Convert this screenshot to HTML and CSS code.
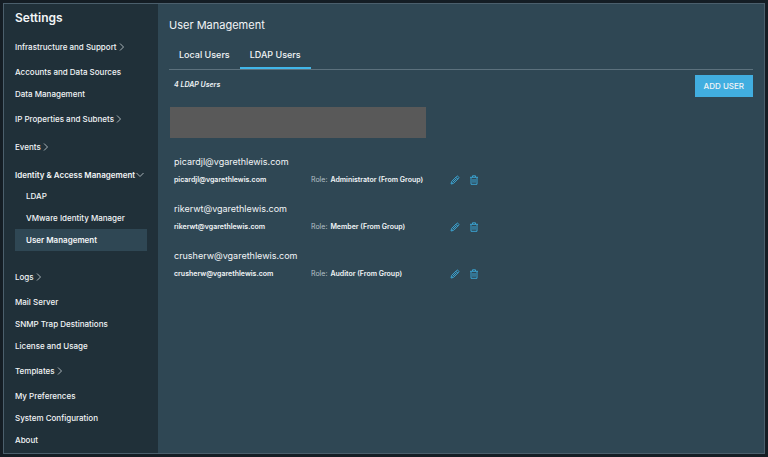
FILE: index.html
```html
<!DOCTYPE html>
<html lang="en">
<head>
<meta charset="utf-8">
<title>User Management</title>
<link rel="stylesheet" href="styles.css">
</head>
<body>
<svg class="sprite" aria-hidden="true">
  <symbol id="chevron" viewBox="0 0 8 8"><path d="M2 .5 5.500 4 2 7.500" /></symbol>
  <symbol id="pencil" viewBox="0 0 10 10"><path d="M1 9 1.600 6.500 6.700 1.400Q7.400.700 8.100 1.400L8.600 1.900Q9.300 2.600 8.600 3.300L3.500 8.400ZM5.900 2.200 7.800 4.100M2.500 7.500 6.500 3.500" /></symbol>
  <symbol id="trash" viewBox="0 0 10 10"><path d="M1 2.300H9M3.500 2.100V.800H6.500V2.100M2 2.500V9.300H8V2.500M4 4V7.800M6 4V7.800" /></symbol>
</svg>
<div class="window">
  <nav class="sidebar" aria-label="Settings">
    <h1 class="sidebar-title">Settings</h1>
    <button class="group">Infrastructure and Support<svg class="chevron"><use href="#chevron"/></svg></button>
    <a class="item" href="#">Accounts and Data Sources</a>
    <a class="item" href="#">Data Management</a>
    <button class="group">IP Properties and Subnets<svg class="chevron"><use href="#chevron"/></svg></button>
    <button class="group">Events<svg class="chevron"><use href="#chevron"/></svg></button>
    <button class="group open" aria-expanded="true">Identity &amp; Access Management<svg class="chevron"><use href="#chevron"/></svg></button>
    <div class="sub">
      <a class="item" href="#">LDAP</a>
      <a class="item" href="#">VMware Identity Manager</a>
      <a class="item active" href="#" aria-current="page">User Management</a>
    </div>
    <button class="group">Logs<svg class="chevron"><use href="#chevron"/></svg></button>
    <a class="item" href="#">Mail Server</a>
    <a class="item" href="#">SNMP Trap Destinations</a>
    <a class="item" href="#">License and Usage</a>
    <button class="group">Templates<svg class="chevron"><use href="#chevron"/></svg></button>
    <a class="item" href="#">My Preferences</a>
    <a class="item" href="#">System Configuration</a>
    <a class="item" href="#">About</a>
  </nav>
  <main class="content">
    <h2 class="page-title">User Management</h2>
    <div class="tabs" role="tablist">
      <button class="tab" role="tab" aria-selected="false">Local Users</button>
      <button class="tab selected" role="tab" aria-selected="true">LDAP Users</button>
    </div>
    <div class="toolbar">
      <p class="count">4 LDAP Users</p>
      <button class="add">ADD USER</button>
    </div>
    <div class="redacted"></div>
    <section class="user">
      <h3 class="name">picardjl@vgarethlewis.com</h3>
      <div class="details">
        <span class="email">picardjl@vgarethlewis.com</span>
        <span class="role"><span class="label">Role:</span>Administrator (From Group)</span>
        <button class="action" aria-label="Edit"><svg class="icon"><use href="#pencil"/></svg></button>
        <button class="action" aria-label="Delete"><svg class="icon"><use href="#trash"/></svg></button>
      </div>
    </section>
    <section class="user">
      <h3 class="name">rikerwt@vgarethlewis.com</h3>
      <div class="details">
        <span class="email">rikerwt@vgarethlewis.com</span>
        <span class="role"><span class="label">Role:</span>Member (From Group)</span>
        <button class="action" aria-label="Edit"><svg class="icon"><use href="#pencil"/></svg></button>
        <button class="action" aria-label="Delete"><svg class="icon"><use href="#trash"/></svg></button>
      </div>
    </section>
    <section class="user">
      <h3 class="name">crusherw@vgarethlewis.com</h3>
      <div class="details">
        <span class="email">crusherw@vgarethlewis.com</span>
        <span class="role"><span class="label">Role:</span>Auditor (From Group)</span>
        <button class="action" aria-label="Edit"><svg class="icon"><use href="#pencil"/></svg></button>
        <button class="action" aria-label="Delete"><svg class="icon"><use href="#trash"/></svg></button>
      </div>
    </section>
  </main>
</div>
</body>
</html>
```
FILE: styles.css
```css
* { box-sizing: border-box; }

body {
  display: flex;
  min-height: 100vh;
  margin: 0;
  padding: 3px;
  background: #141d24;
  color: #f2f5f7;
  font: 500 8px/12px Inter, "Liberation Sans", sans-serif;
}

h1, h2, h3, p { margin: 0; }

button {
  border: 0;
  padding: 0;
  background: none;
  color: inherit;
  font: inherit;
  cursor: pointer;
}

a { color: inherit; text-decoration: none; }

svg { fill: none; stroke: currentColor; }

.sprite { position: absolute; width: 0; height: 0; }

.window {
  display: flex;
  flex: 1;
  border: 1px solid #4b5f6c;
  background: #2f4754;
}

.sidebar {
  display: flex;
  flex-direction: column;
  flex: 0 0 154px;
  padding: 0 11px;
  background: #203039;
}

.sidebar-title {
  height: 29px;
  font-size: 12px;
  font-weight: 600;
  line-height: 28px;
}

.group {
  display: flex;
  align-items: center;
  gap: 1px;
  height: 28px;
  white-space: nowrap;
}

.item {
  height: 22px;
  line-height: 22px;
  white-space: nowrap;
}

.chevron { width: 8px; height: 8px; color: #a9b3b9; }

.open { font-weight: 600; }

.open .chevron { transform: rotate(90deg); }

.sub {
  display: flex;
  flex-direction: column;
  margin: -4px 0 12px;
}

.sub .item { padding-left: 11px; }

.active { background: #2f4754; font-weight: 600; }

.content { flex: 1; padding: 11px; }

.page-title {
  font-size: 11px;
  font-weight: 400;
  line-height: 20px;
}

.tabs {
  display: flex;
  margin-top: 8px;
  border-bottom: 1px solid #5c717d;
}

.tab {
  height: 26px;
  padding: 0 10px;
  border-bottom: 2px solid transparent;
  font-size: 9px;
}

.selected { border-color: #41b7ea; }

.toolbar {
  display: flex;
  justify-content: space-between;
  align-items: flex-start;
  margin-top: 5px;
}

.count {
  padding-left: 5px;
  font-size: 7px;
  font-style: italic;
  font-weight: 600;
  line-height: 20px;
}

.add {
  height: 22px;
  padding: 0 9px;
  background: #41aee0;
}

.redacted {
  width: 256px;
  height: 31px;
  margin: 10px 0 15px 1px;
  background: #595959;
}

.user { margin-bottom: 11px; padding-left: 5px; }

.name {
  font-size: 9px;
  font-weight: 400;
  line-height: 18px;
}

.details {
  display: grid;
  grid-template-columns: 137px 139px 10px 10px;
  align-items: center;
  height: 18px;
  font-size: 7px;
  font-weight: 600;
}

.label { margin-right: 3px; color: #b5c0c7; font-weight: 400; }

.action { height: 10px; color: #3ba3d1; }

.action + .action { margin-left: 9px; }

.icon { display: block; width: 10px; height: 10px; }
```
